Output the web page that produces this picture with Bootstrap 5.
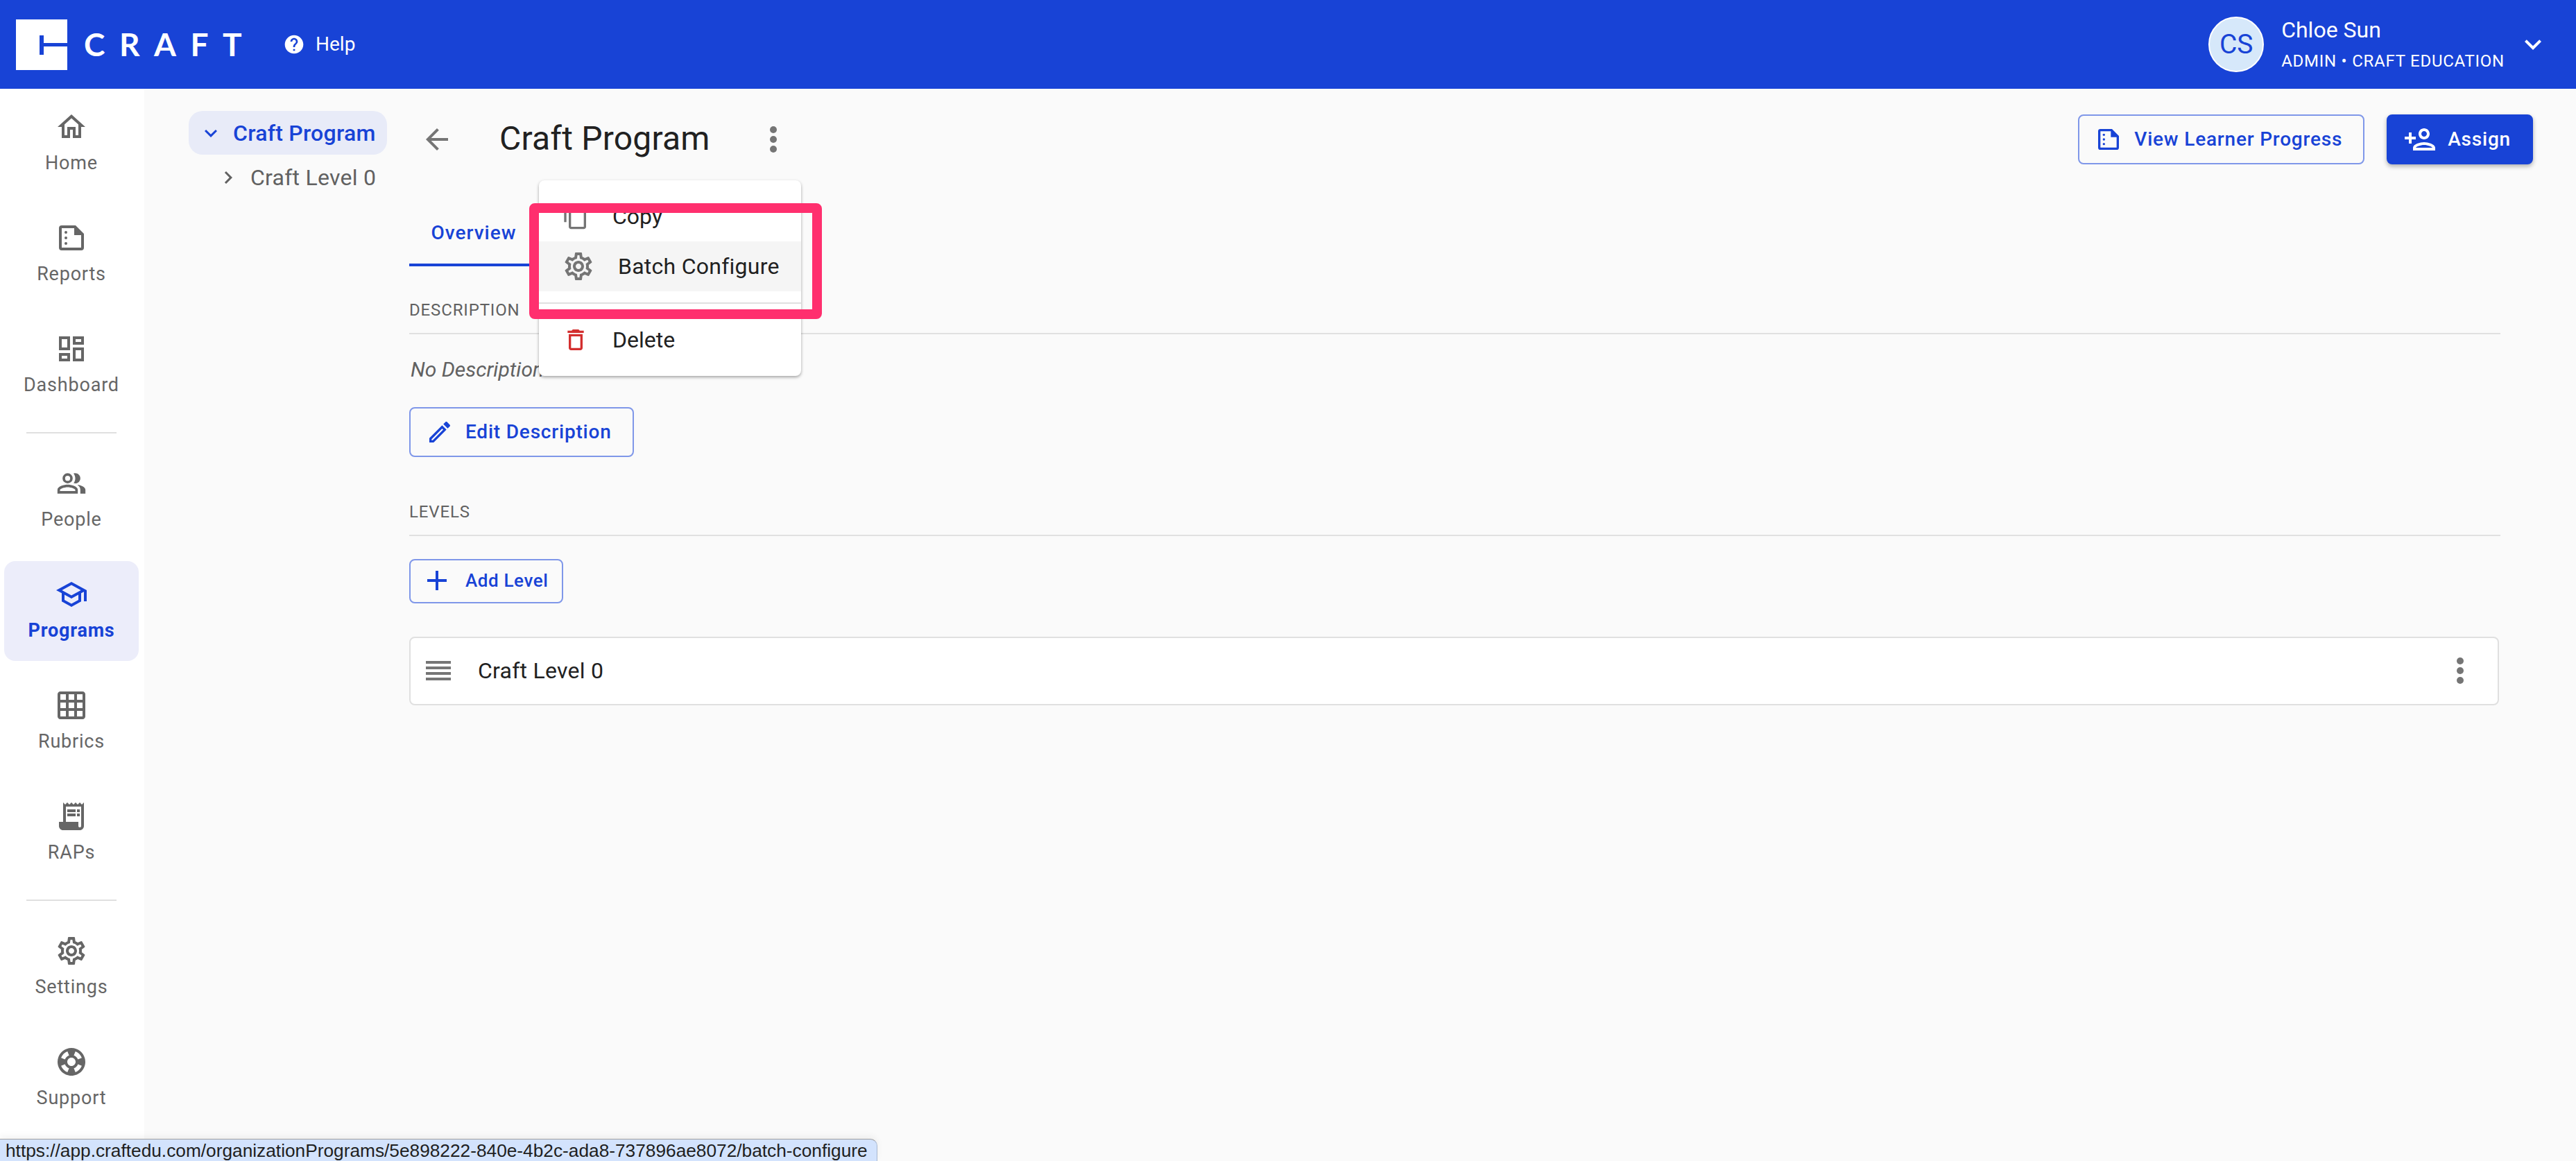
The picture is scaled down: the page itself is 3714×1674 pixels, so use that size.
<!DOCTYPE html>
<html lang="en">
<head>
<meta charset="utf-8">
<title>Craft Program</title>
<link rel="stylesheet" href="https://cdn.jsdelivr.net/npm/bootstrap@5.3.0/dist/css/bootstrap.min.css">
<style>
:root{--crblue:#1843d6;--crgray:#666666;}
html,body{height:100%;}
body{font-family:Roboto,"Liberation Sans",sans-serif;background:#fafafa;color:#212121;overflow:hidden;font-size:28px;}
.ico{display:block;fill:currentColor;flex:none;}
.s36{width:36px;height:36px;}.s40{width:40px;height:40px;}.s48{width:48px;height:48px;}.s32{width:32px;height:32px;}
.s44w{width:44px;height:48px;}
.topbar{height:128px;background:var(--crblue);color:#fff;padding:0 38px 0 23px;}
.logo-box{width:74px;height:73px;display:block;}
.logo-word{font-family:Lato,"Liberation Sans",sans-serif;font-size:46px;line-height:1;letter-spacing:20.5px;margin-left:24px;font-weight:700;width:233px;}
.help-link{color:#fff;text-decoration:none;font-size:28px;margin-left:54px;gap:15px;}
.avatar-disc{width:80px;height:80px;border-radius:50%;background:#d6e8fa;border:2px solid #fff;color:var(--crblue);font-size:39px;}
.user-name{font-size:32px;line-height:40px;}
.user-sub{font-size:24px;line-height:32px;letter-spacing:.75px;margin-top:9px;}
.user-block{margin-left:25px;margin-right:17px;margin-top:-1px;}
.shell{height:calc(100vh - 128px);}
.sidenav{width:208px;background:#fff;padding:7px 6px 0;flex:none;}
.snav-item{height:144px;width:194px;border-radius:16px;padding-top:24px;margin-bottom:16px;color:var(--crgray);text-decoration:none;font-size:27px;line-height:32px;letter-spacing:.8px;}
.snav-item .ico{margin-bottom:12px;}
.snav-item.is-on{background:#ecedfa;color:var(--crblue);font-weight:700;}
.snav-rule{height:2px;width:130px;background:#e0e0e0;margin:8px 0 24px 32px;}
.tree{width:382px;padding:32px 0 0 64px;flex:none;}
.tree-on{width:286px;height:63px;border-radius:20px;background:#e8ebf8;color:var(--crblue);font-weight:500;font-size:32px;letter-spacing:.25px;padding-left:14px;gap:14px;}
.tree-sub{height:66px;color:#616161;font-size:32px;letter-spacing:.25px;padding-left:39px;gap:14px;}
.pane{flex:1 1 auto;padding:36px 109px 0 0;position:relative;min-width:0;}
.pane-head{height:73px;margin-right:-47px;}
.back-ico{color:#757575;margin-left:16px;}
.pane-title{font-size:48px;font-weight:400;margin:0 0 2px 66px;line-height:56px;color:#212121;letter-spacing:.2px;}
.kebab{color:#757575;}
.title-kebab{margin-left:67px;}
.btn-cr{height:72px;border-radius:8px;font-size:28px;font-weight:500;letter-spacing:.8px;padding:0 30px 0 22px;gap:17px;border:2px solid #7f97e9;color:var(--crblue);background:transparent;white-space:nowrap;}
.btn-cr:hover{color:var(--crblue);border-color:#7f97e9;background:transparent;}
.btn-fill{background:var(--crblue);border-color:var(--crblue);color:#fff;box-shadow:0 3px 6px rgba(0,0,0,.3);gap:16px;margin-left:32px;}
.btn-fill:hover{background:var(--crblue);border-color:var(--crblue);color:#fff;}
.tab-strip{margin-top:51px;}
.tab-one{width:186px;height:96px;border-bottom:4px solid var(--crblue);color:var(--crblue);font-weight:500;font-size:28px;letter-spacing:1px;padding:4px 0 0;border-radius:0;}
.sect-head{font-size:24px;line-height:32px;color:#616161;padding-bottom:17px;border-bottom:2px solid #e0e0e0;letter-spacing:.85px;}
.no-desc{font-style:italic;color:#616161;font-size:30px;line-height:40px;margin-top:31px;padding-left:2px;}
.btn-short{height:64px;padding:0 19px 2px 14px;font-size:26px;letter-spacing:.6px;}
.level-row{height:99px;margin:48px 2px 0 0;border:2px solid #e0e0e0;border-radius:8px;background:#fff;padding:0 30px 2px 16px;font-size:32px;letter-spacing:.25px;color:#212121;}
.drag-ico{color:#757575;margin-right:33px;}
.pop-menu{position:absolute;left:777px;top:260px;width:378px;height:282px;background:#fff;border:0;border-radius:8px;padding:16px 0;margin:0;box-shadow:0 2px 4px rgba(0,0,0,.35);z-index:5;font-size:32px;min-width:0;}
.pop-row{height:72px;padding:0 0 0 33px;color:#212121;gap:33px;}
.pop-row:hover{background:#f5f5f5;color:#212121;}
.pop-row.is-hot{background:#f5f5f5;gap:33px;letter-spacing:.25px;}
.pop-rule{margin:16px 0;border-top:2px solid #e0e0e0;opacity:1;}
.del-ico{color:#d32f2f;}
.call-frame{position:absolute;left:763px;top:293px;width:422px;height:167px;border:14px solid #ff2f6e;border-radius:8px;z-index:6;pointer-events:none;}
.status-tip{position:absolute;left:0;bottom:0;height:32px;width:1265px;background:#d3e3fd;border-top:1px solid #a0a0a0;border-right:1px solid #a8b8d0;border-top-right-radius:10px;font-family:"Liberation Sans",sans-serif;font-size:26.27px;line-height:30px;padding:1px 0 0 8px;color:#1f1f1f;white-space:nowrap;z-index:7;box-shadow:0 -4px 10px rgba(0,0,0,.05);}
</style>
</head>
<body class="position-relative">
<header class="topbar d-flex align-items-center">
  <svg class="logo-box" viewBox="0 0 74 73" aria-hidden="true"><rect width="74" height="73" fill="#fff"/><path d="M34 23h6v11h34v5H40v12h-6z" fill="#1843d6"/></svg>
  <span class="logo-word">CRAFT</span>
  <a class="help-link d-flex align-items-center" href="#">
    <svg class="ico s32" viewBox="0 0 24 24" aria-hidden="true"><path d="M12 2C6.48 2 2 6.48 2 12s4.48 10 10 10 10-4.48 10-10S17.52 2 12 2zm1 17h-2v-2h2v2zm2.07-7.75l-.9.92C13.45 12.9 13 13.5 13 15h-2v-.5c0-1.1.45-2.1 1.17-2.83l1.24-1.26c.37-.36.59-.86.59-1.41 0-1.1-.9-2-2-2s-2 .9-2 2H8c0-2.21 1.79-4 4-4s4 1.79 4 4c0 .88-.36 1.68-.93 2.25z"/></svg>
    <span>Help</span>
  </a>
  <div class="ms-auto d-flex align-items-center">
    <div class="avatar-disc d-flex align-items-center justify-content-center">CS</div>
    <div class="user-block">
      <div class="user-name">Chloe Sun</div>
      <div class="user-sub">ADMIN • CRAFT EDUCATION</div>
    </div>
    <svg class="ico s48" viewBox="0 0 24 24" aria-hidden="true"><path d="M16.59 8.59L12 13.17 7.41 8.59 6 10l6 6 6-6z"/></svg>
  </div>
</header>

<div class="shell d-flex">
  <nav class="sidenav d-flex flex-column">
    <a class="snav-item d-flex flex-column align-items-center" href="#"><svg class="ico s48" viewBox="0 0 24 24"><path d="M12 5.69l5 4.5V18h-2v-6H9v6H7v-7.81l5-4.5M12 3L2 12h3v8h6v-6h2v6h6v-8h3L12 3z"/></svg><span>Home</span></a>
    <a class="snav-item d-flex flex-column align-items-center" href="#"><svg class="ico s48" viewBox="0 0 24 24"><path fill-rule="evenodd" d="M5 3h10l6 6v10a2 2 0 0 1-2 2H5a2 2 0 0 1-2-2V5a2 2 0 0 1 2-2zm0 2v14h14v-9h-5V5z"/><circle cx="8" cy="8" r="1"/><circle cx="8" cy="12" r="1"/><circle cx="8" cy="16" r="1"/></svg><span>Reports</span></a>
    <a class="snav-item d-flex flex-column align-items-center" href="#"><svg class="ico s48" viewBox="0 0 24 24"><path d="M19 5v2h-4V5h4M9 5v6H5V5h4m10 8v6h-4v-6h4M9 17v2H5v-2h4M21 3h-8v6h8V3zM11 3H3v10h8V3zm10 8h-8v10h8V11zm-10 4H3v6h8v-6z"/></svg><span>Dashboard</span></a>
    <div class="snav-rule"></div>
    <a class="snav-item d-flex flex-column align-items-center" href="#"><svg class="ico s44w" viewBox="0 0 24 24"><path d="M16.67 13.13C18.04 14.06 19 15.32 19 17v3h4v-3c0-2.18-3.57-3.47-6.33-3.87z"/><path fill-rule="evenodd" d="M9 4a4 4 0 1 0 0 8 4 4 0 0 0 0-8zm0 2a2 2 0 1 1 0 4 2 2 0 0 1 0-4z"/><path d="M15 12c2.21 0 4-1.79 4-4s-1.79-4-4-4c-.47 0-.91.1-1.33.24C14.5 5.27 15 6.58 15 8s-.5 2.73-1.33 3.76c.42.14.86.24 1.33.24z"/><path d="M9 13c-2.67 0-8 1.34-8 4v3h16v-3c0-2.66-5.33-4-8-4zm6 5H3v-.99C3.2 16.29 6.3 15 9 15s5.8 1.29 6 2z"/></svg><span>People</span></a>
    <a class="snav-item is-on d-flex flex-column align-items-center" href="#"><svg class="ico s48" viewBox="0 0 24 24"><path d="M12 3L1 9l4 2.18v6L12 21l7-3.82v-6l2-1.09V17h2V9L12 3zm6.82 6L12 12.72 5.18 9 12 5.28 18.82 9zM17 15.99l-5 2.73-5-2.73v-3.72L12 15l5-2.73v3.72z"/></svg><span>Programs</span></a>
    <a class="snav-item d-flex flex-column align-items-center" href="#"><svg class="ico s48" viewBox="0 0 24 24"><path d="M20 2H4c-1.1 0-2 .9-2 2v16c0 1.1.9 2 2 2h16c1.1 0 2-.9 2-2V4c0-1.1-.9-2-2-2zM8 20H4v-4h4v4zm0-6H4v-4h4v4zm0-6H4V4h4v4zm6 12h-4v-4h4v4zm0-6h-4v-4h4v4zm0-6h-4V4h4v4zm6 12h-4v-4h4v4zm0-6h-4v-4h4v4zm0-6h-4V4h4v4z"/></svg><span>Rubrics</span></a>
    <a class="snav-item d-flex flex-column align-items-center" href="#"><svg class="ico s48" viewBox="0 0 24 24"><path d="M19.5 3.5L18 2l-1.5 1.5L15 2l-1.5 1.5L12 2l-1.5 1.5L9 2 7.5 3.5 6 2v14H3v3c0 1.66 1.34 3 3 3h12c1.66 0 3-1.34 3-3V2l-1.5 1.5zM19 19c0 .55-.45 1-1 1s-1-.45-1-1v-3H8V5h11v14z"/><path d="M9 7h6v2H9zM16 7h2v2h-2zM9 10h6v2H9zM16 10h2v2h-2z"/></svg><span>RAPs</span></a>
    <div class="snav-rule"></div>
    <a class="snav-item d-flex flex-column align-items-center" href="#"><svg class="ico s48" viewBox="0 0 24 24"><path d="M19.43 12.98c.04-.32.07-.64.07-.98 0-.34-.03-.66-.07-.98l2.11-1.65c.19-.15.24-.42.12-.64l-2-3.46c-.09-.16-.26-.25-.44-.25-.06 0-.12.01-.17.03l-2.49 1c-.52-.4-1.08-.73-1.69-.98l-.38-2.65C14.46 2.18 14.25 2 14 2h-4c-.25 0-.46.18-.49.42l-.38 2.65c-.61.25-1.17.59-1.69.98l-2.49-1c-.06-.02-.12-.03-.18-.03-.17 0-.34.09-.43.25l-2 3.46c-.13.22-.07.49.12.64l2.11 1.65c-.04.32-.07.65-.07.98 0 .33.03.66.07.98l-2.11 1.65c-.19.15-.24.42-.12.64l2 3.46c.09.16.26.25.44.25.06 0 .12-.01.17-.03l2.49-1c.52.4 1.08.73 1.69.98l.38 2.65c.03.24.24.42.49.42h4c.25 0 .46-.18.49-.42l.38-2.65c.61-.25 1.17-.59 1.69-.98l2.49 1c.06.02.12.03.18.03.17 0 .34-.09.43-.25l2-3.46c.12-.22.07-.49-.12-.64l-2.11-1.65zm-1.98-1.71c.04.31.05.52.05.73 0 .21-.02.43-.05.73l-.14 1.13.89.7 1.08.84-.7 1.21-1.27-.51-1.04-.42-.9.68c-.43.32-.84.56-1.25.73l-1.06.43-.16 1.13-.2 1.35h-1.4l-.19-1.35-.16-1.13-1.06-.43c-.43-.18-.83-.41-1.23-.71l-.91-.7-1.06.43-1.27.51-.7-1.21 1.08-.84.89-.7-.14-1.13c-.03-.31-.05-.54-.05-.74s.02-.43.05-.73l.14-1.13-.89-.7-1.08-.84.7-1.21 1.27.51 1.04.42.9-.68c.43-.32.84-.56 1.25-.73l1.06-.43.16-1.13.2-1.35h1.39l.19 1.35.16 1.13 1.06.43c.43.18.83.41 1.23.71l.91.7 1.06-.43 1.27-.51.7 1.21-1.07.85-.89.7.14 1.13zM12 8c-2.21 0-4 1.79-4 4s1.79 4 4 4 4-1.79 4-4-1.79-4-4-4zm0 6c-1.1 0-2-.9-2-2s.9-2 2-2 2 .9 2 2-.9 2-2 2z"/></svg><span>Settings</span></a>
    <a class="snav-item d-flex flex-column align-items-center" href="#"><svg class="ico s48" viewBox="0 0 24 24"><path d="M12 2C6.48 2 2 6.48 2 12s4.48 10 10 10 10-4.48 10-10S17.52 2 12 2zm7.46 7.12-2.78 1.15c-.51-1.36-1.58-2.44-2.95-2.94l1.15-2.78c2.1.8 3.77 2.47 4.58 4.57zM12 15c-1.66 0-3-1.34-3-3s1.34-3 3-3 3 1.34 3 3-1.34 3-3 3zM9.13 4.54l1.17 2.78c-1.38.5-2.47 1.59-2.98 2.97L4.54 9.13c.81-2.11 2.48-3.78 4.59-4.59zM4.54 14.87l2.78-1.15c.51 1.38 1.59 2.46 2.97 2.96l-1.17 2.78c-2.1-.81-3.77-2.48-4.58-4.59zm10.34 4.59-1.15-2.78c1.37-.51 2.45-1.59 2.95-2.97l2.78 1.17c-.81 2.1-2.48 3.77-4.58 4.58z"/></svg><span>Support</span></a>
  </nav>

  <aside class="tree">
    <div class="tree-on d-flex align-items-center">
      <svg class="ico s36" viewBox="0 0 24 24"><path d="M16.59 8.59L12 13.17 7.41 8.59 6 10l6 6 6-6z"/></svg>
      <span>Craft Program</span>
    </div>
    <div class="tree-sub d-flex align-items-center">
      <svg class="ico s36" viewBox="0 0 24 24"><path d="M10 6L8.59 7.41 13.17 12l-4.58 4.59L10 18l6-6z"/></svg>
      <span>Craft Level 0</span>
    </div>
  </aside>

  <main class="pane">
    <div class="pane-head d-flex align-items-center">
      <svg class="ico s48 back-ico" viewBox="0 0 24 24"><path d="M20 11H7.83l5.59-5.59L12 4l-8 8 8 8 1.41-1.41L7.83 13H20v-2z"/></svg>
      <h1 class="pane-title">Craft Program</h1>
      <svg class="ico s48 kebab title-kebab" viewBox="0 0 24 24"><circle cx="12" cy="5" r="2.5"/><circle cx="12" cy="12" r="2.5"/><circle cx="12" cy="19" r="2.5"/></svg>
      <div class="ms-auto d-flex align-items-center">
        <button type="button" class="btn btn-cr d-flex align-items-center">
          <svg class="ico s40" viewBox="0 0 24 24"><path fill-rule="evenodd" d="M5 3h10l6 6v10a2 2 0 0 1-2 2H5a2 2 0 0 1-2-2V5a2 2 0 0 1 2-2zm0 2v14h14v-9h-5V5z"/><circle cx="8" cy="8" r="1"/><circle cx="8" cy="12" r="1"/><circle cx="8" cy="16" r="1"/></svg>
          <span>View Learner Progress</span>
        </button>
        <button type="button" class="btn btn-cr btn-fill d-flex align-items-center">
          <svg class="ico s48" viewBox="0 0 24 24"><path d="M15 12c2.21 0 4-1.79 4-4s-1.79-4-4-4-4 1.79-4 4 1.79 4 4 4zm0-6c1.1 0 2 .9 2 2s-.9 2-2 2-2-.9-2-2 .9-2 2-2zm0 8c-2.67 0-8 1.34-8 4v2h16v-2c0-2.66-5.33-4-8-4zm-6 4c.22-.72 3.31-2 6-2 2.7 0 5.8 1.29 6 2H9zm-3-3v-3h3v-2H6V7H4v3H1v2h3v3h2z"/></svg>
          <span>Assign</span>
        </button>
      </div>
    </div>

    <ul class="nav tab-strip">
      <li class="nav-item"><a class="nav-link tab-one d-flex align-items-center justify-content-center" href="#">Overview</a></li>
    </ul>

    <div class="sect-head" style="margin-top:47px">DESCRIPTION</div>
    <div class="no-desc">No Description</div>
    <button type="button" class="btn btn-cr d-inline-flex align-items-center" style="margin-top:34px">
      <svg class="ico s40" viewBox="0 0 24 24"><path d="M3 17.25V21h3.75L17.81 9.94l-3.75-3.75L3 17.25zM5.92 19H5v-.92l9.06-9.06.92.92L5.92 19zM20.71 7.04c.39-.39.39-1.02 0-1.41l-2.34-2.34c-.39-.39-1.02-.39-1.41 0l-1.83 1.83 3.75 3.75 1.83-1.83z"/></svg>
      <span>Edit Description</span>
    </button>

    <div class="sect-head" style="margin-top:63px">LEVELS</div>
    <button type="button" class="btn btn-cr btn-short d-inline-flex align-items-center" style="margin-top:33px">
      <svg class="ico s48" viewBox="0 0 24 24"><path d="M19 13h-6v6h-2v-6H5v-2h6V5h2v6h6v2z"/></svg>
      <span>Add Level</span>
    </button>

    <div class="level-row d-flex align-items-center">
      <svg class="ico s48 drag-ico" viewBox="0 0 24 24"><path d="M3 15h18v-2H3v2zm0 4h18v-2H3v2zm0-8h18V9H3v2zm0-6v2h18V5H3z"/></svg>
      <span>Craft Level 0</span>
      <svg class="ico s48 kebab ms-auto" viewBox="0 0 24 24"><circle cx="12" cy="5" r="2.5"/><circle cx="12" cy="12" r="2.5"/><circle cx="12" cy="19" r="2.5"/></svg>
    </div>
  </main>
</div>

<div class="dropdown-menu show pop-menu">
  <a class="dropdown-item pop-row d-flex align-items-center" href="#"><svg class="ico s40" viewBox="0 0 24 24" style="color:#757575"><path d="M16 1H4c-1.1 0-2 .9-2 2v14h2V3h12V1zm3 4H8c-1.1 0-2 .9-2 2v14c0 1.1.9 2 2 2h11c1.1 0 2-.9 2-2V7c0-1.1-.9-2-2-2zm0 16H8V7h11v14z"/></svg><span>Copy</span></a>
  <a class="dropdown-item pop-row is-hot d-flex align-items-center" href="#"><svg class="ico s48" viewBox="0 0 24 24" style="color:#757575"><path d="M19.43 12.98c.04-.32.07-.64.07-.98 0-.34-.03-.66-.07-.98l2.11-1.65c.19-.15.24-.42.12-.64l-2-3.46c-.09-.16-.26-.25-.44-.25-.06 0-.12.01-.17.03l-2.49 1c-.52-.4-1.08-.73-1.69-.98l-.38-2.65C14.46 2.18 14.25 2 14 2h-4c-.25 0-.46.18-.49.42l-.38 2.65c-.61.25-1.17.59-1.69.98l-2.49-1c-.06-.02-.12-.03-.18-.03-.17 0-.34.09-.43.25l-2 3.46c-.13.22-.07.49.12.64l2.11 1.65c-.04.32-.07.65-.07.98 0 .33.03.66.07.98l-2.11 1.65c-.19.15-.24.42-.12.64l2 3.46c.09.16.26.25.44.25.06 0 .12-.01.17-.03l2.49-1c.52.4 1.08.73 1.69.98l.38 2.65c.03.24.24.42.49.42h4c.25 0 .46-.18.49-.42l.38-2.65c.61-.25 1.17-.59 1.69-.98l2.49 1c.06.02.12.03.18.03.17 0 .34-.09.43-.25l2-3.46c.12-.22.07-.49-.12-.64l-2.11-1.65zm-1.98-1.71c.04.31.05.52.05.73 0 .21-.02.43-.05.73l-.14 1.13.89.7 1.08.84-.7 1.21-1.27-.51-1.04-.42-.9.68c-.43.32-.84.56-1.25.73l-1.06.43-.16 1.13-.2 1.35h-1.4l-.19-1.35-.16-1.13-1.06-.43c-.43-.18-.83-.41-1.23-.71l-.91-.7-1.06.43-1.27.51-.7-1.21 1.08-.84.89-.7-.14-1.13c-.03-.31-.05-.54-.05-.74s.02-.43.05-.73l.14-1.13-.89-.7-1.08-.84.7-1.21 1.27.51 1.04.42.9-.68c.43-.32.84-.56 1.25-.73l1.06-.43.16-1.13.2-1.35h1.39l.19 1.35.16 1.13 1.06.43c.43.18.83.41 1.23.71l.91.7 1.06-.43 1.27-.51.7 1.21-1.07.85-.89.7.14 1.13zM12 8c-2.21 0-4 1.79-4 4s1.79 4 4 4 4-1.79 4-4-1.79-4-4-4zm0 6c-1.1 0-2-.9-2-2s.9-2 2-2 2 .9 2 2-.9 2-2 2z"/></svg><span>Batch Configure</span></a>
  <hr class="dropdown-divider pop-rule">
  <a class="dropdown-item pop-row d-flex align-items-center" href="#"><svg class="ico s40 del-ico" viewBox="0 0 24 24"><path d="M6 19c0 1.1.9 2 2 2h8c1.1 0 2-.9 2-2V7H6v12zM8 9h8v10H8V9zm7.5-5l-1-1h-5l-1 1H5v2h14V4h-3.5z"/></svg><span>Delete</span></a>
</div>
<div class="call-frame"></div>
<div class="status-tip">https://app.craftedu.com/organizationPrograms/5e898222-840e-4b2c-ada8-737896ae8072/batch-configure</div>
<script src="https://cdn.jsdelivr.net/npm/bootstrap@5.3.0/dist/js/bootstrap.bundle.min.js"></script>
</body>
</html>
